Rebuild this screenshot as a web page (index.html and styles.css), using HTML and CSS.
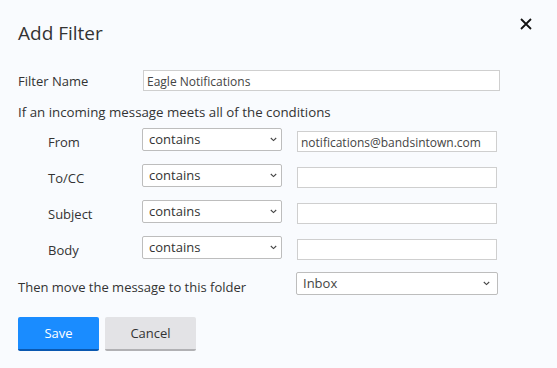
FILE: index.html
```html
<!DOCTYPE html>
<html lang="en">
<head>
<meta charset="utf-8">
<title>Add Filter</title>
<link rel="stylesheet" href="styles.css">
</head>
<body>
<div class="dialog">
  <div class="header">
    <h1 class="title">Add Filter</h1>
    <button class="close" aria-label="Close">
      <svg width="12" height="12" viewBox="0 0 12 12"><path d="M1 1 L11 11 M11 1 L1 11" stroke="#111" stroke-width="1.8" fill="none"/></svg>
    </button>
  </div>

  <div class="row name-row">
    <label class="lbl name-lbl">Filter Name</label>
    <div class="input name-input">Eagle Notifications</div>
  </div>

  <p class="intro">If an incoming message meets all of the conditions</p>

  <div class="conditions">
    <div class="row cond">
      <label class="lbl cond-lbl">From</label>
      <div class="select cond-select"><span>contains</span><svg class="chev" width="7" height="5" viewBox="0 0 7 5"><path d="M0.8 1 L3.5 3.6 L6.2 1" stroke="#444" stroke-width="1.1" fill="none"/></svg></div>
      <div class="input cond-input">notifications@bandsintown.com</div>
    </div>
    <div class="row cond">
      <label class="lbl cond-lbl">To/CC</label>
      <div class="select cond-select"><span>contains</span><svg class="chev" width="7" height="5" viewBox="0 0 7 5"><path d="M0.8 1 L3.5 3.6 L6.2 1" stroke="#444" stroke-width="1.1" fill="none"/></svg></div>
      <div class="input cond-input"></div>
    </div>
    <div class="row cond">
      <label class="lbl cond-lbl">Subject</label>
      <div class="select cond-select"><span>contains</span><svg class="chev" width="7" height="5" viewBox="0 0 7 5"><path d="M0.8 1 L3.5 3.6 L6.2 1" stroke="#444" stroke-width="1.1" fill="none"/></svg></div>
      <div class="input cond-input"></div>
    </div>
    <div class="row cond">
      <label class="lbl cond-lbl">Body</label>
      <div class="select cond-select"><span>contains</span><svg class="chev" width="7" height="5" viewBox="0 0 7 5"><path d="M0.8 1 L3.5 3.6 L6.2 1" stroke="#444" stroke-width="1.1" fill="none"/></svg></div>
      <div class="input cond-input"></div>
    </div>
  </div>

  <div class="row move-row">
    <label class="lbl move-lbl">Then move the message to this folder</label>
    <div class="select folder-select"><span>Inbox</span><svg class="chev" width="7" height="5" viewBox="0 0 7 5"><path d="M0.8 1 L3.5 3.6 L6.2 1" stroke="#444" stroke-width="1.1" fill="none"/></svg></div>
  </div>

  <div class="actions">
    <button class="btn save">Save</button>
    <button class="btn cancel">Cancel</button>
  </div>
</div>
</body>
</html>
```
FILE: styles.css
```css
html, body {
  margin: 0;
  padding: 0;
  background: #f9fbfe;
}
body {
  font-family: "Open Sans", "Noto Sans", sans-serif;
  font-size: 13px;
  color: #333;
  width: 557px;
  height: 368px;
  overflow: hidden;
}
.dialog {
  padding: 19px 0 0 18px;
  box-sizing: border-box;
  height: 368px;
}
.header {
  display: flex;
  justify-content: space-between;
  align-items: center;
  height: 28px;
  padding-right: 24px;
}
.title {
  margin: 0;
  font-size: 19px;
  font-weight: 400;
  line-height: 28px;
  color: #333;
}
.close {
  border: 0;
  background: transparent;
  padding: 0;
  width: 14px;
  height: 14px;
  display: flex;
  align-items: center;
  justify-content: center;
  margin-top: -18px;
}
.row {
  display: flex;
  align-items: center;
}
.lbl {
  line-height: 18px;
  color: #333;
}
.name-row {
  margin-top: 23px;
  height: 21px;
}
.name-lbl {
  width: 125px;
  padding-top: 1px;
}
.input {
  box-sizing: border-box;
  height: 21px;
  border: 1px solid #cfcfcf;
  background: #fff;
  color: #444;
  font-size: 12px;
  padding: 1px 3px 0;
  line-height: 19px;
  white-space: nowrap;
  overflow: hidden;
}
.name-input {
  width: 357px;
}
.intro {
  margin: 12px 0 0 0;
  line-height: 18px;
  font-size: 13.3px;
}
.conditions {
  margin-top: 7px;
  display: flex;
  flex-direction: column;
  gap: 12px;
}
.cond {
  padding-left: 30px;
  height: 24px;
}
.cond-lbl {
  width: 94px;
  padding-top: 3px;
}
.select {
  box-sizing: border-box;
  height: 23px;
  border: 1px solid #bdbdbd;
  border-radius: 2px;
  background: #fff;
  color: #333;
  display: flex;
  align-items: center;
  justify-content: space-between;
  margin-bottom: 2px;
}
.cond-select {
  width: 140px;
  padding: 0 4px 0 6px;
}
.select span {
  line-height: 19px;
}
.cond-select span {
  padding-top: 1px;
}
.chev {
  display: block;
}
.cond-input {
  width: 200px;
  margin-left: 15px;
  margin-top: 3px;
}
.move-row {
  margin-top: 12px;
  height: 24px;
}
.move-lbl {
  width: 278px;
  padding-top: 5px;
}
.folder-select {
  width: 202px;
  padding: 0 7px 0 6px;
  color: #444;
}
.actions {
  display: flex;
  gap: 6px;
  margin-top: 21px;
}
.btn {
  font-family: inherit;
  font-size: 13px;
  height: 34px;
  border: 0;
  border-radius: 2px;
  padding: 0;
  box-sizing: border-box;
  cursor: pointer;
}
.save {
  width: 81px;
  background: #1a8cff;
  border-bottom: 2px solid #0a58b0;
  color: #fff;
}
.cancel {
  width: 91px;
  background: #e3e3e6;
  border-bottom: 2px solid #b1b1b4;
  color: #333;
}
```
